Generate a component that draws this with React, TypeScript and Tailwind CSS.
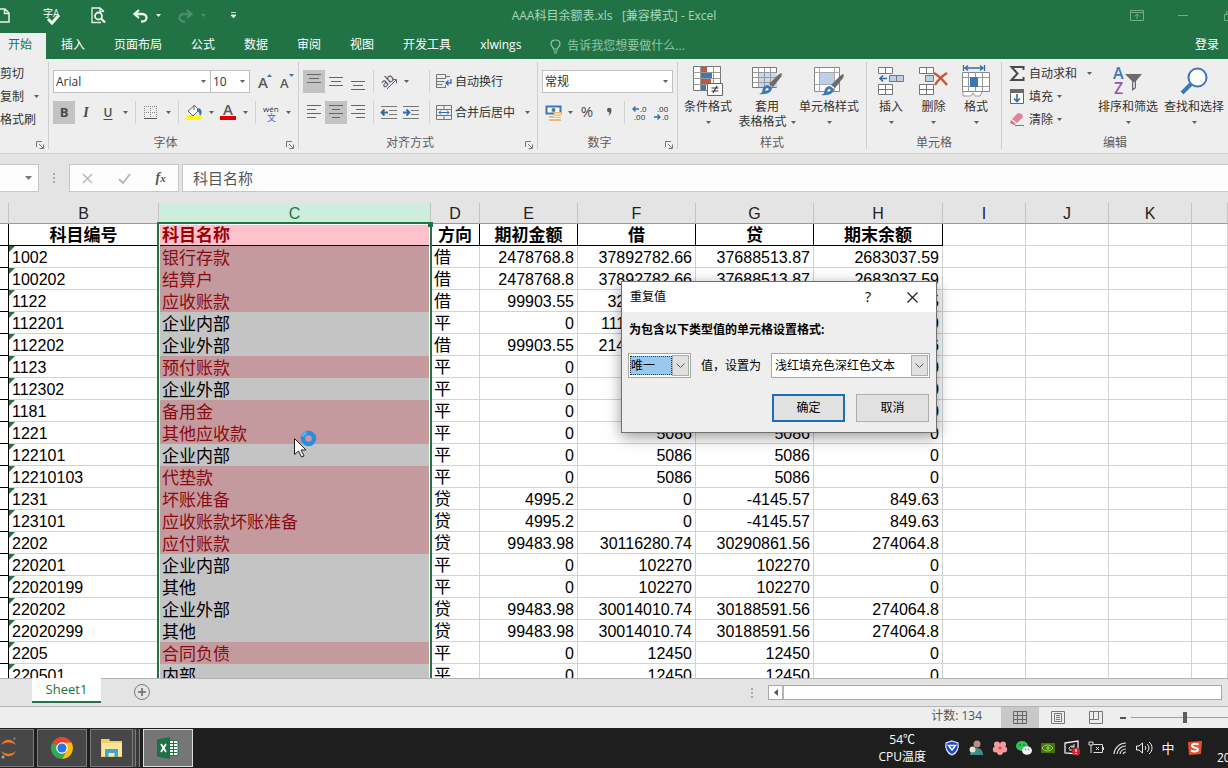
import { useState, type ReactNode } from "react";
import clsx from "clsx";

interface Account {
  code: string;
  name: string;
  side: string;
  opening: string;
  debit: string;
  credit: string;
  closing: string;
  unique?: boolean;
}

const accounts: Account[] = [
  { code: "1002", name: "银行存款", side: "借", opening: "2478768.8", debit: "37892782.66", credit: "37688513.87", closing: "2683037.59", unique: true },
  { code: "100202", name: "结算户", side: "借", opening: "2478768.8", debit: "37892782.66", credit: "37688513.87", closing: "2683037.59", unique: true },
  { code: "1122", name: "应收账款", side: "借", opening: "99903.55", debit: "3257120.18", credit: "3251708.28", closing: "105315.45", unique: true },
  { code: "112201", name: "企业内部", side: "平", opening: "0", debit: "11171200.18", credit: "11171199.59", closing: "0.59" },
  { code: "112202", name: "企业外部", side: "借", opening: "99903.55", debit: "21400000.18", credit: "21345880.28", closing: "105314.86" },
  { code: "1123", name: "预付账款", side: "平", opening: "0", debit: "12000", credit: "12000", closing: "0", unique: true },
  { code: "112302", name: "企业外部", side: "平", opening: "0", debit: "12000", credit: "12000", closing: "0" },
  { code: "1181", name: "备用金", side: "平", opening: "0", debit: "3000", credit: "3000", closing: "0", unique: true },
  { code: "1221", name: "其他应收款", side: "平", opening: "0", debit: "5086", credit: "5086", closing: "0", unique: true },
  { code: "122101", name: "企业内部", side: "平", opening: "0", debit: "5086", credit: "5086", closing: "0" },
  { code: "12210103", name: "代垫款", side: "平", opening: "0", debit: "5086", credit: "5086", closing: "0", unique: true },
  { code: "1231", name: "坏账准备", side: "贷", opening: "4995.2", debit: "0", credit: "-4145.57", closing: "849.63", unique: true },
  { code: "123101", name: "应收账款坏账准备", side: "贷", opening: "4995.2", debit: "0", credit: "-4145.57", closing: "849.63", unique: true },
  { code: "2202", name: "应付账款", side: "贷", opening: "99483.98", debit: "30116280.74", credit: "30290861.56", closing: "274064.8", unique: true },
  { code: "220201", name: "企业内部", side: "平", opening: "0", debit: "102270", credit: "102270", closing: "0" },
  { code: "22020199", name: "其他", side: "平", opening: "0", debit: "102270", credit: "102270", closing: "0" },
  { code: "220202", name: "企业外部", side: "贷", opening: "99483.98", debit: "30014010.74", credit: "30188591.56", closing: "274064.8" },
  { code: "22020299", name: "其他", side: "贷", opening: "99483.98", debit: "30014010.74", credit: "30188591.56", closing: "274064.8" },
  { code: "2205", name: "合同负债", side: "平", opening: "0", debit: "12450", credit: "12450", closing: "0", unique: true },
  { code: "220501", name: "内部", side: "平", opening: "0", debit: "12450", credit: "12450", closing: "0" },
];

const tabs = ["插入", "页面布局", "公式", "数据", "审阅", "视图", "开发工具", "xlwings"];

/* ---------- small shared pieces ---------- */

interface SvgProps {
  w: number;
  h: number;
  className?: string;
  children: ReactNode;
}

const Svg = ({ w, h, className, children }: SvgProps) => (
  <svg
    width={w}
    height={h}
    viewBox={`0 0 ${w} ${h}`}
    fill="none"
    className={clsx("shrink-0 overflow-visible", className)}
    aria-hidden="true"
  >
    {children}
  </svg>
);

const Caret = ({ className = "text-[#606060]" }: { className?: string }) => (
  <Svg w={5} h={3} className={className}>
    <path d="M0 0h5L2.500 3z" fill="currentColor" />
  </Svg>
);

const CaretButton = ({ label }: { label: string }) => (
  <button aria-label={label} className="flex h-[22px] w-3 items-center justify-center">
    <Caret />
  </button>
);

interface ToolProps {
  label: string;
  active?: boolean;
  children: ReactNode;
}

const Tool = ({ label, active, children }: ToolProps) => (
  <button
    aria-label={label}
    className={clsx("flex h-[23px] w-[22px] shrink-0 items-center justify-center", active && "bg-[#c3c3c3]")}
  >
    {children}
  </button>
);

const Divider = ({ className = "mx-1" }: { className?: string }) => (
  <span className={clsx("h-[23px] w-px shrink-0 bg-[#d2d2d2]", className)} />
);

interface GroupProps {
  title: string;
  className: string;
  launcher?: boolean;
  last?: boolean;
  children: ReactNode;
}

const Group = ({ title, className, launcher, last, children }: GroupProps) => (
  <section className={clsx("flex shrink-0 pt-[3px] pb-1", className)}>
    <div className="flex min-w-0 flex-1 flex-col">
      <div className="flex-1">{children}</div>
      <div className="flex h-[13px] items-center">
        <h2 className="flex-1 text-center leading-4 text-[#5c5c5c]">{title}</h2>
        {launcher && (
          <button aria-label={`${title}设置`} className="flex w-4 justify-center pt-1">
            <Svg w={8} h={8}>
              <path d="M.5 6V.5H6M3 3l4 4M7.500 3.500v4h-4" stroke="#777" />
            </Svg>
          </button>
        )}
      </div>
    </div>
    {!last && <span className="w-px bg-[#cfcfcf]" />}
  </section>
);

interface BigButtonProps {
  icon: ReactNode;
  label: string;
  second?: string;
  className: string;
}

const BigButton = ({ icon, label, second, className }: BigButtonProps) => (
  <button className={clsx("flex shrink-0 flex-col items-center pt-px whitespace-nowrap", className)}>
    <span className="flex h-9 items-center">{icon}</span>
    <span className="leading-4">{label}</span>
    <span className="flex h-[14px] items-center gap-1 leading-[14px]">
      {second}
      <Caret />
    </span>
  </button>
);

/* ---------- icons ---------- */

const Lines = ({ widths, top = 0 }: { widths: [number, number][]; top?: number }) => (
  <Svg w={14} h={15}>
    {widths.map(([x, w], i) => (
      <path key={i} d={`M${x} ${top + i * 4 + 0.5}h${w}`} stroke="#666" />
    ))}
  </Svg>
);

const Indent = ({ right }: { right?: boolean }) => (
  <Svg w={17} h={13}>
    <path d="M0 .5h16M8 4.500h8M8 8.500h8M0 12.500h16" stroke="#777" />
    <path
      d={right ? "M0 6.500h6M3.500 3.500l3 3-3 3" : "M1 6.500h6M3.500 3.500l-3 3 3 3"}
      stroke="#2f6da8"
      strokeWidth="1.800"
    />
  </Svg>
);

const Brush = ({ x, y }: { x: number; y: number }) => (
  <g transform={`translate(${x} ${y})`}>
    <path d="M22 0c1 0 1 2 0 4l-8 10-4-3 9-9z" fill="#6b6b6b" />
    <path d="M9 12l4 3c0 4-5 7-13 6 4-1 3-3 4-6 1-2 3-3 5-3z" fill="#3c78b4" />
    <path d="M6 17c1 1 2 1 4-1l-2-1z" fill="#fff" />
  </g>
);

const ConditionalIcon = () => (
  <Svg w={30} h={31}>
    <path d="M.5 .5h27v24H.5z" fill="#fff" stroke="#777" />
    <path d="M8 1h6v5H8zM8 13h10v5H8z" fill="#c8563a" />
    <path d="M8 7h11v5H8zM8 19h5v5H8z" fill="#3c78b4" />
    <path d="M.5 6.500h27M.5 12.500h27M.5 18.500h27M7.500 .5v24M20.500 .5v24" stroke="#999" />
    <path d="M14.500 17.500h15v12h-15z" fill="#fff" stroke="#666" />
    <path d="M18.500 22h7M18.500 25h7M24 20l-4 7" stroke="#333" strokeWidth="1.200" />
  </Svg>
);

const FormatTableIcon = () => (
  <Svg w={31} h={29}>
    <path d="M.5 .5h24v20H.5z" fill="#fff" stroke="#777" />
    <path d="M7 6h18v14H7z" fill="#c9d8ec" />
    <path d="M.5 5.500h24M.5 10.500h24M.5 15.500h24M6.500 .5v20M12.500 .5v20M18.500 .5v20" stroke="#999" />
    <Brush x={7} y={6} />
  </Svg>
);

const CellStyleIcon = () => (
  <Svg w={31} h={29}>
    <path d="M.5 .5h25v24H.5z" fill="#fff" stroke="#888" />
    <path d="M.5 5.500h25M.5 17.500h25M5.500 .5v24M20.500 .5v24" stroke="#aaa" />
    <path d="M6 6h14v11H6z" fill="#bcd0ea" />
    <Brush x={7} y={7} />
  </Svg>
);

const InsertIcon = () => (
  <Svg w={27} h={29}>
    <path d="M.5 .5h14v6H.5zM7.500 .5v6M.5 17.500h14v10H.5zM.5 22.500h14M7.500 17.500v10" fill="#fff" stroke="#777" />
    <path d="M11.500 8.500h14v6h-14zM18.500 8.500v6" fill="#bcd0ea" stroke="#777" />
    <path d="M2 11.500h7M5 8.500l-3 3 3 3" stroke="#2f6da8" strokeWidth="1.600" />
  </Svg>
);

const DeleteIcon = () => (
  <Svg w={30} h={29}>
    <path d="M.5 .5h14v6H.5zM7.500 .5v6M.5 17.500h14v10H.5zM.5 22.500h14M7.500 17.500v10" fill="#fff" stroke="#777" />
    <path d="M6.500 8.500h8v6h-8z" fill="#bcd0ea" stroke="#777" />
    <path d="M15 6c5 3 9 7 13 12M28 6c-5 3-9 7-12 12" stroke="#d0532f" strokeWidth="2.400" />
  </Svg>
);

const FormatIcon = () => (
  <Svg w={29} h={32}>
    <path d="M1.500 0v6M22.500 0v6M3 3h18M6 .5L3 3l3 2.500M18 .5L21 3l-3 2.500" stroke="#2f6da8" strokeWidth="1.300" />
    <path d="M.5 7.500h27v19H.5z" fill="#fff" stroke="#888" />
    <path d="M.5 12.500h27M.5 21.500h27M6.500 7.500v19M20.500 7.500v19M13.500 7.500v5M13.500 21.500v5" stroke="#999" />
    <path d="M8 12h8v10H8z" fill="#3c78b4" />
    <path d="M1 27v4h8l2-3 2 3h5l2-4" fill="#fff" stroke="#999" />
  </Svg>
);

const SortIcon = () => (
  <Svg w={30} h={29}>
    <text x="0" y="12" fontSize="16" fontWeight="600" fill="#3c78b4">A</text>
    <text x="1" y="27" fontSize="16" fontWeight="600" fill="#9257b5">Z</text>
    <path d="M12 7h17l-6 7v7l-4 3V14z" fill="#6b6b6b" />
    <path d="M21 15v6" stroke="#eee" strokeWidth="1.500" />
  </Svg>
);

const FindIcon = () => (
  <Svg w={28} h={28}>
    <circle cx="17.500" cy="10.500" r="9" fill="#fff" stroke="#3c78b4" strokeWidth="2" />
    <path d="M11 17L2 26" stroke="#3c78b4" strokeWidth="4" />
  </Svg>
);

/* ---------- window header ---------- */

const TitleBar = () => (
  <header className="flex h-[33px] items-center pb-0.5 text-[#e8f5ec]">
    <div className="flex flex-1 items-center">
      <button aria-label="新建" className="-ml-2">
        <Svg w={18} h={15}>
          <path d="M1 1h12l4 4v9H1zM12.500 1v4.500H17" stroke="currentColor" strokeWidth="1.500" />
        </Svg>
      </button>
      <button aria-label="拼写检查" className="ml-[33px]">
        <Svg w={18} h={18}>
          <text x="0" y="10" fontSize="10" fontWeight="500" fill="currentColor">字A</text>
          <path d="M5 12l4 4 7-8" stroke="currentColor" strokeWidth="3" />
        </Svg>
      </button>
      <button aria-label="打印预览" className="ml-[30px]">
        <Svg w={15} h={17}>
          <path d="M12.500 5V4L9 1H1v14.500h9M9 1v3.500h3.500" stroke="currentColor" strokeWidth="1.300" />
          <circle cx="7.500" cy="9" r="3.500" stroke="currentColor" strokeWidth="1.800" />
          <path d="M10 11.500l4 4" stroke="currentColor" strokeWidth="2.400" />
        </Svg>
      </button>
      <button aria-label="撤消" className="ml-[27px]">
        <Svg w={15} h={14}>
          <path d="M6 1L1.500 5 6 9M2 5h7c6 0 6 7.500 0 7.500H8" stroke="currentColor" strokeWidth="2.300" />
        </Svg>
      </button>
      <Caret className="ml-2 text-[#e8f5ec]" />
      <button aria-label="恢复" className="ml-[17px] text-[#4b9068]">
        <Svg w={15} h={14}>
          <path d="M9 1l4.500 4L9 9M13 5H6c-6 0-6 7.500 0 7.500h1" stroke="currentColor" strokeWidth="2.300" />
        </Svg>
      </button>
      <Caret className="ml-2 text-[#4b9068]" />
      <button aria-label="自定义快速访问工具栏" className="ml-6">
        <Svg w={7} h={7}>
          <path d="M1 .5h5M1 3h5L3.500 6z" stroke="currentColor" fill="currentColor" strokeWidth=".8" />
        </Svg>
      </button>
    </div>
    <h1 className="whitespace-pre text-[#a9d6ba]">AAA科目余额表.xls   [兼容模式] - Excel</h1>
    <div className="flex flex-1 items-center justify-end overflow-hidden text-[#6fae87]">
      <button aria-label="功能区显示选项">
        <Svg w={14} h={11}>
          <path d="M.5 .5h13v10H.5zM.5 2.500h13M7 9V4.500M4.500 6.500L7 4l2.500 2.500" stroke="currentColor" />
        </Svg>
      </button>
      <button aria-label="最小化" className="ml-[34px]">
        <Svg w={10} h={3}>
          <path d="M0 1.500h10" stroke="currentColor" />
        </Svg>
      </button>
      <button aria-label="向下还原" className="ml-[36px] w-1 overflow-hidden">
        <Svg w={11} h={10}>
          <path d="M.5 3.500h7v6h-7zM2.500 3.500v-3h8v6h-3" stroke="currentColor" />
        </Svg>
      </button>
    </div>
  </header>
);

const TabBar = () => (
  <nav className="flex h-[26px] items-stretch text-white">
    <button className="bg-[#eeeeee] pr-[14px] pb-0.5 pl-2 text-[#217346]">开始</button>
    {tabs.map((tab) => (
      <button key={tab} className="pr-[14px] pb-0.5 pl-[15px] whitespace-nowrap">
        {tab}
      </button>
    ))}
    <label className="flex items-center gap-1.5 pl-[15px] text-[#93c6a7]">
      <Svg w={11} h={15}>
        <path d="M3.500 10C3.500 8 1 7.500 1 4.800 1 2.500 3 1 5.500 1S10 2.500 10 4.800C10 7.500 7.500 8 7.500 10zM3.500 12h4M4 14h3" stroke="currentColor" strokeWidth="1.200" />
      </Svg>
      <input
        aria-label="告诉我您想要做什么"
        placeholder="告诉我您想要做什么..."
        className="w-40 bg-transparent outline-none placeholder:text-[#93c6a7]"
      />
    </label>
    <button className="mr-[9px] ml-auto pb-0.5">登录</button>
  </nav>
);

/* ---------- ribbon ---------- */

const ClipboardGroup = () => (
  <Group title="" className="w-[49px]" launcher>
    <div className="flex flex-col items-start overflow-hidden whitespace-nowrap">
      <button className="h-[23px]">剪切</button>
      <div className="flex h-[23px] w-full items-center">
        <button>复制</button>
        <button aria-label="复制选项" className="ml-[9px] p-px">
          <Caret />
        </button>
      </div>
      <button className="h-[23px]">格式刷</button>
    </div>
  </Group>
);

const FontGroup = () => (
  <Group title="字体" className="w-[250px]" launcher>
    <div className="flex flex-col gap-2 pt-2 pl-1">
      <div className="flex items-center">
        <label className="flex h-[23px] w-[158px] items-center border border-[#c0c0c0] bg-white pr-1">
          <select aria-label="字体" className="min-w-0 flex-1 appearance-none pl-0.5 outline-none">
            <option>Arial</option>
          </select>
          <Caret />
        </label>
        <label className="-ml-px flex h-[23px] w-10 items-center border border-[#c0c0c0] bg-white pr-1">
          <select aria-label="字号" className="min-w-0 flex-1 appearance-none pl-0.5 outline-none">
            <option>10</option>
          </select>
          <Caret />
        </label>
        <div className="ml-1 flex">
          <Tool label="增大字号">
            <Svg w={14} h={16}>
              <text x="0" y="14" fontSize="15" fontWeight="600" fill="#5c5c5c">A</text>
              <path d="M9 3h5l-2.500-3z" fill="#3c78b4" />
            </Svg>
          </Tool>
          <Tool label="减小字号">
            <Svg w={14} h={16}>
              <text x="0" y="14" fontSize="13" fontWeight="600" fill="#5c5c5c">A</text>
              <path d="M9 0h5l-2.500 3z" fill="#3c78b4" />
            </Svg>
          </Tool>
        </div>
      </div>
      <div className="flex items-center text-[#4a4a4a]">
        <Tool label="加粗" active>
          <b className="text-[13px]">B</b>
        </Tool>
        <Tool label="倾斜">
          <b className="font-['Liberation_Serif',serif] text-sm italic">I</b>
        </Tool>
        <Tool label="下划线">
          <b className="font-semibold underline underline-offset-2">U</b>
        </Tool>
        <CaretButton label="下划线选项" />
        <Divider />
        <Tool label="边框">
          <Svg w={14} h={14}>
            <path d="M.5 0v13M6.500 0v13M12.500 0v13M0 .5h13M0 6.500h13" stroke="#888" strokeDasharray="1 1" />
            <path d="M0 12.500h13" stroke="#555" />
          </Svg>
        </Tool>
        <CaretButton label="边框选项" />
        <Divider />
        <Tool label="填充颜色">
          <Svg w={17} h={17}>
            <path d="M8 2L2 7l5 5 6-6-5-5v5" fill="#fff" stroke="#666" />
            <path d="M11 4c5 0 6 5 3 8-1-2 0-4-3-5z" fill="#3c78b4" />
            <path d="M0 12h16v4H0z" fill="#ffff1e" />
          </Svg>
        </Tool>
        <CaretButton label="填充颜色选项" />
        <Tool label="字体颜色">
          <Svg w={16} h={17}>
            <text x="3" y="11" fontSize="15" fontWeight="600" fill="#5c5c5c">A</text>
            <path d="M0 12h16v4H0z" fill="#e00000" />
          </Svg>
        </Tool>
        <CaretButton label="字体颜色选项" />
        <Divider />
        <Tool label="拼音">
          <Svg w={16} h={18}>
            <text x="0" y="8" fontSize="8" fill="#333">wén</text>
            <text x="4" y="17" fontSize="9" fill="#2f6da8">文</text>
          </Svg>
        </Tool>
        <CaretButton label="拼音选项" />
      </div>
    </div>
  </Group>
);

const AlignGroup = () => (
  <Group title="对齐方式" className="w-[239px]" launcher>
    <div className="flex flex-col gap-2 pt-2 pl-1">
      <div className="flex items-center">
        <Tool label="顶端对齐" active>
          <Lines widths={[[0, 14], [2, 10], [0, 14]]} />
        </Tool>
        <Tool label="垂直居中">
          <Lines widths={[[0, 14], [2, 10], [0, 14]]} top={3} />
        </Tool>
        <Tool label="底端对齐">
          <Lines widths={[[0, 14], [2, 10], [0, 14]]} top={7} />
        </Tool>
        <Divider />
        <Tool label="方向">
          <Svg w={16} h={16}>
            <text x="0" y="11" fontSize="12" fill="#444" transform="rotate(-42 6 8)">ab</text>
            <path d="M6 15L15 6M11.500 5.500H15.500V9.500" stroke="#666" />
          </Svg>
        </Tool>
        <CaretButton label="方向选项" />
        <Divider className="mr-1.5 ml-[17px]" />
        <button className="flex items-center gap-[3px]">
          <Svg w={16} h={15}>
            <path d="M.5 .5h9v4h-9zM9 2.500h5M.5 7.500h8M.5 10.500h6M.5 13.500h9M.5 4v10M9.500 11v3" stroke="#777" />
            <path d="M15 5v4h-5M12.500 6.500L10 9l2.500 2.500" stroke="#2f6da8" strokeWidth="1.300" />
          </Svg>
          自动换行
        </button>
      </div>
      <div className="flex items-center">
        <Tool label="左对齐">
          <Lines widths={[[0, 14], [0, 9], [0, 14], [0, 9]]} />
        </Tool>
        <Tool label="居中" active>
          <Lines widths={[[0, 14], [3, 8], [0, 14], [3, 8]]} />
        </Tool>
        <Tool label="右对齐">
          <Lines widths={[[0, 14], [5, 9], [0, 14], [5, 9]]} />
        </Tool>
        <Divider />
        <Tool label="减少缩进量">
          <Indent />
        </Tool>
        <Tool label="增加缩进量">
          <Indent right />
        </Tool>
        <Divider className="mr-1.5 ml-[7px]" />
        <button className="flex items-center gap-[3px]">
          <Svg w={16} h={15}>
            <path d="M.5 .5h15v14H.5zM.5 4.500h15M.5 10.500h15M8 .5v4M8 10.500v4" stroke="#777" />
            <path d="M3 7.500h10M5 5.500l-2 2 2 2M11 5.500l2 2-2 2" stroke="#2f6da8" />
          </Svg>
          合并后居中
        </button>
        <span className="w-1.5" />
        <CaretButton label="合并选项" />
      </div>
    </div>
  </Group>
);

const NumberGroup = () => (
  <Group title="数字" className="w-[140px]" launcher>
    <div className="flex flex-col gap-2 px-1 pt-2">
      <label className="flex h-[23px] items-center border border-[#c0c0c0] bg-white pr-1">
        <select aria-label="数字格式" className="min-w-0 flex-1 appearance-none pl-0.5 outline-none">
          <option>常规</option>
        </select>
        <Caret />
      </label>
      <div className="flex items-center">
        <Tool label="会计数字格式">
          <Svg w={17} h={16}>
            <path d="M1.500 1.500h14v7h-14z" fill="#fff" stroke="#3c78b4" strokeWidth="2" />
            <circle cx="8.500" cy="5" r="2" fill="#3c78b4" />
            <path d="M9 7h7v9H9zM4 11h6v5H4z" fill="#f0b964" />
            <path d="M9 9h7M9 11.500h7M4 13.500h12" stroke="#fff" />
          </Svg>
        </Tool>
        <CaretButton label="会计数字格式选项" />
        <Tool label="百分比样式">
          <span className="pb-1 text-[15px] leading-4 text-[#4a4a4a]">%</span>
        </Tool>
        <Tool label="千位分隔样式">
          <Svg w={5} h={10}>
            <path d="M0 2a2 2 0 0 1 4.500 0c0 3-1 5-3.500 6 1-1 1.500-2 1.500-3.500C1 4.500 0 3.500 0 2z" fill="#5c5c5c" />
          </Svg>
        </Tool>
        <Divider />
        <Tool label="增加小数位数">
          <Svg w={16} h={16}>
            <text x="8" y="7" fontSize="8" fill="#333">.0</text>
            <text x="2" y="15" fontSize="8" fill="#333">.00</text>
            <path d="M1 4h6M3.500 1.500L1 4l2.500 2.500" stroke="#2f6da8" strokeWidth="1.300" />
          </Svg>
        </Tool>
        <Tool label="减少小数位数">
          <Svg w={16} h={16}>
            <text x="3" y="7" fontSize="8" fill="#333">.00</text>
            <text x="8" y="15" fontSize="8" fill="#333">.0</text>
            <path d="M0 12h6M3.500 9.500L6 12l-2.500 2.500" stroke="#2f6da8" strokeWidth="1.300" />
          </Svg>
        </Tool>
      </div>
    </div>
  </Group>
);

const EditGroup = () => (
  <Group title="编辑" className="min-w-[226px] flex-1" last>
    <div className="flex">
      <div className="flex w-[94px] flex-col pl-2">
        <button className="flex h-[23px] items-center">
          <Svg w={15} h={15} className="mr-1">
            <path d="M13.500 4V1H1.500l6 6.500-6 6.500h12v-3" stroke="#4a4a4a" strokeWidth="2" />
          </Svg>
          自动求和
          <Caret className="ml-2.5 text-[#606060]" />
        </button>
        <button className="flex h-[23px] items-center">
          <Svg w={15} h={15} className="mr-1">
            <path d="M.5 .5h13v14H.5z" fill="#fff" stroke="#666" />
            <path d="M0 0h14v4H0z" fill="#6b6b6b" />
            <path d="M7 5v8M4 9.500l3 3 3-3" stroke="#2f6da8" strokeWidth="1.600" />
          </Svg>
          填充
          <Caret className="ml-1 text-[#606060]" />
        </button>
        <button className="flex h-[23px] items-center">
          <Svg w={15} h={15} className="mr-1">
            <path d="M8 1l4 1 1 3-6 6-5-4z" fill="#e58396" />
            <path d="M1 8l5 4-2 1-4-2z" fill="#d9748a" />
            <path d="M5 13.500h9" stroke="#777" />
          </Svg>
          清除
          <Caret className="ml-1 text-[#606060]" />
        </button>
      </div>
      <BigButton icon={<SortIcon />} label="排序和筛选" className="w-16" />
      <BigButton icon={<FindIcon />} label="查找和选择" className="ml-0.5 w-16" />
    </div>
  </Group>
);

const Ribbon = () => (
  <div className="flex h-[95px] overflow-hidden border-b border-[#cfcfcf] bg-[#eeeeee] text-[#333]">
    <ClipboardGroup />
    <FontGroup />
    <AlignGroup />
    <NumberGroup />
    <Group title="样式" className="w-[189px]">
      <div className="flex">
        <BigButton icon={<ConditionalIcon />} label="条件格式" className="w-[60px]" />
        <BigButton icon={<FormatTableIcon />} label="套用" second="表格格式" className="w-[58px]" />
        <BigButton icon={<CellStyleIcon />} label="单元格样式" className="ml-px w-16" />
      </div>
    </Group>
    <Group title="单元格" className="w-[135px]">
      <div className="flex pl-[3px]">
        <BigButton icon={<InsertIcon />} label="插入" className="w-[42px]" />
        <BigButton icon={<DeleteIcon />} label="删除" className="w-[43px]" />
        <BigButton icon={<FormatIcon />} label="格式" className="w-[42px]" />
      </div>
    </Group>
    <EditGroup />
  </div>
);

const Dots = () => (
  <Svg w={2} h={10}>
    <path d="M0 0h2v2H0zM0 4h2v2H0zM0 8h2v2H0z" fill="#aaa" />
  </Svg>
);

const FormulaBar = () => (
  <div className="flex h-[49px] items-center bg-[#e4e4e4] pb-px">
    <div className="flex h-7 w-[39px] items-center justify-end border border-l-0 border-[#c6c6c6] bg-[#fdfdfd] pr-1.5">
      <button aria-label="名称框">
        <Svg w={7} h={4}>
          <path d="M0 0h7L3.500 4z" fill="#777" />
        </Svg>
      </button>
    </div>
    <div className="flex w-[30px] justify-center">
      <Dots />
    </div>
    <div className="flex h-7 w-[110px] items-center justify-around border border-[#c6c6c6] bg-[#fdfdfd]">
      <button aria-label="取消输入">
        <Svg w={11} h={11}>
          <path d="M1 1l9 9M10 1l-9 9" stroke="#b9b9b9" strokeWidth="1.500" />
        </Svg>
      </button>
      <button aria-label="确认输入">
        <Svg w={13} h={11}>
          <path d="M1 6l4 4 7-9" stroke="#b9b9b9" strokeWidth="2" />
        </Svg>
      </button>
      <button
        aria-label="插入函数"
        className="font-['Liberation_Serif',serif] text-sm leading-4 font-bold text-[#555] italic"
      >
        f<span className="text-[11px]">x</span>
      </button>
    </div>
    <input
      aria-label="编辑栏"
      defaultValue="科目名称"
      className="ml-[3px] h-7 min-w-0 flex-1 border border-r-0 border-[#c6c6c6] bg-[#fdfdfd] pb-0.5 pl-2.5 text-[15px] text-[#555] outline-none"
    />
  </div>
);

/* ---------- worksheet ---------- */

const grid = "border-r border-b border-[#d2d2d2]";
const headCell = "border-r border-b border-black p-0 pt-0.5 text-center text-[17px] font-bold";

const Sheet = () => (
  <main className="relative min-h-0 flex-1 overflow-hidden bg-white font-['Liberation_Sans','Noto_Sans_CJK_SC',sans-serif] text-base leading-[19px] text-black">
    <table className="w-full table-fixed border-separate border-spacing-0">
      <colgroup>
        <col className="w-[9px]" />
        <col className="w-[150px]" />
        <col className="w-[272px]" />
        <col className="w-[49px]" />
        <col className="w-[98px]" />
        <col className="w-[118px]" />
        <col className="w-[118px]" />
        <col className="w-[129px]" />
        <col className="w-[83px]" />
        <col className="w-[83px]" />
        <col className="w-[83px]" />
        <col />
      </colgroup>
      <thead>
        <tr className="h-[21px] bg-[#e4e4e4]">
          {["", "B", "C", "D", "E", "F", "G", "H", "I", "J", "K", ""].map((letter, i) => (
            <th
              key={i}
              className={clsx(
                "border-r border-b border-r-[#c4c4c4] border-b-[#9b9b9b] p-0 pt-0.5 leading-[18px] font-normal",
                letter === "C" ? "bg-[#cdeedd] text-[#217346]" : "text-[#222]",
              )}
            >
              {letter}
            </th>
          ))}
        </tr>
      </thead>
      <tbody>
        <tr className="h-[22px]">
          <td className="border-r border-b border-black p-0" />
          <td className={headCell}>科目编号</td>
          <td className="border-b border-black bg-[#ffc1cb] p-0 pt-0.5 pl-[3px] text-[17px] font-bold text-[#9c0006]">
            科目名称
          </td>
          <td className={headCell}>方向</td>
          <td className={headCell}>期初金额</td>
          <td className={headCell}>借</td>
          <td className={headCell}>贷</td>
          <td className={headCell}>期末余额</td>
          <td className={grid} />
          <td className={grid} />
          <td className={grid} />
          <td className={grid} />
        </tr>
        {accounts.map((row) => (
          <tr key={row.code} className="h-[22px]">
            <td className="border-r border-b border-black p-0" />
            <td className={clsx(grid, "relative p-0 pt-0.5 pl-[3px]")}>
              <span className="absolute top-0 left-0 border-t-[6px] border-r-[6px] border-t-[#217346] border-r-transparent" />
              {row.code}
            </td>
            <td
              className={clsx(
                "p-0 pt-0.5 pl-[3px] text-[17px]",
                row.unique ? "bg-[#c49a9e] text-[#8b0a12]" : "bg-[#c4c4c4]",
              )}
            >
              {row.name}
            </td>
            <td className={clsx(grid, "p-0 pt-0.5 pl-[3px] text-[17px]")}>{row.side}</td>
            <td className={clsx(grid, "p-0 pt-0.5 pr-[3px] text-right")}>{row.opening}</td>
            <td className={clsx(grid, "p-0 pt-0.5 pr-[3px] text-right")}>{row.debit}</td>
            <td className={clsx(grid, "p-0 pt-0.5 pr-[3px] text-right")}>{row.credit}</td>
            <td className={clsx(grid, "p-0 pt-0.5 pr-[3px] text-right")}>{row.closing}</td>
            <td className={grid} />
            <td className={grid} />
            <td className={grid} />
            <td className={grid} />
          </tr>
        ))}
      </tbody>
    </table>
    {/* selection frame around column C */}
    <div className="pointer-events-none absolute top-[19px] -bottom-1 left-[157px] w-[275px] border-2 border-[#217346] shadow-[inset_0_0_0_1px_#fff]">
      <span className="absolute -top-0.5 -right-[3px] h-[5px] w-[5px] bg-[#217346]" />
    </div>
  </main>
);

const SheetTabs = () => (
  <div className="flex h-[29px] items-start border-t border-b border-[#b4b4b4] bg-[#e4e4e4]">
    <button className="-mt-px ml-8 h-[25px] w-[69px] border-b-2 border-[#217346] bg-white text-[13px] text-[#217346]">
      Sheet1
    </button>
    <button aria-label="新工作表" className="mt-[5px] ml-[33px]">
      <Svg w={16} h={16}>
        <circle cx="8" cy="8" r="7.500" stroke="#7a7a7a" />
        <path d="M8 4v8M4 8h8" stroke="#6a6a6a" strokeWidth="1.600" />
      </Svg>
    </button>
    <div className="ml-auto flex items-center gap-[15px] pt-1.5 pr-1.5">
      <Dots />
      <div className="flex h-[15px] w-[454px] border border-[#a9a9a9] bg-white">
        <button aria-label="向左滚动" className="flex w-[15px] items-center justify-center border-r-2 border-[#b4b4b4]">
          <Svg w={4} h={7}>
            <path d="M4 0v7L0 3.500z" fill="#555" />
          </Svg>
        </button>
      </div>
    </div>
  </div>
);

const StatusBar = () => (
  <footer className="flex h-[21px] items-stretch justify-end bg-[#eeeeee] text-[#555]">
    <span className="mr-[19px] pt-px leading-4">计数: 134</span>
    <button aria-label="普通" className="flex w-[38px] items-center justify-center bg-[#c8c8c8]">
      <Svg w={14} h={13}>
        <path d="M.5 .5h13v12H.5zM.5 4.500h13M.5 8.500h13M4.500 .5v12M9.500 .5v12" stroke="#666" />
      </Svg>
    </button>
    <button aria-label="页面布局" className="flex w-[38px] items-center justify-center">
      <Svg w={14} h={13}>
        <path d="M.5 .5h13v12H.5zM3.500 2.500h7v8h-7zM5 4.500h4M5 6.500h4M5 8.500h4" stroke="#777" />
      </Svg>
    </button>
    <button aria-label="分页预览" className="flex w-[38px] items-center justify-center">
      <Svg w={14} h={13}>
        <path d="M.5 .5h13v12H.5zM4.500 .5v8M9.500 .5v8M4.500 8.500h5M.5 8.500h4" stroke="#777" />
      </Svg>
    </button>
    <button aria-label="缩小" className="ml-[5px]">
      <Svg w={6} h={2}>
        <path d="M0 0h6v2H0z" fill="#555" />
      </Svg>
    </button>
    <div className="ml-[5px] flex w-[97px] items-center overflow-hidden">
      <input
        type="range"
        aria-label="缩放"
        defaultValue={50}
        className="h-3 w-[108px] shrink-0 appearance-none bg-[linear-gradient(#a0a0a0,#a0a0a0)] bg-[length:100%_1px] bg-center bg-no-repeat [&::-webkit-slider-thumb]:h-[11px] [&::-webkit-slider-thumb]:w-1 [&::-webkit-slider-thumb]:appearance-none [&::-webkit-slider-thumb]:bg-[#5c5c5c]"
      />
    </div>
  </footer>
);

/* ---------- taskbar ---------- */

const taskButton = "flex h-[38px] items-center border";

const Tray = ({ label, children }: { label: string; children: ReactNode }) => (
  <button aria-label={label} className="flex w-6 justify-center">
    <Svg w={16} h={16}>{children}</Svg>
  </button>
);

const Taskbar = () => (
  <div className="flex h-10 items-center overflow-hidden bg-[#1e1e1e] text-white">
    <button aria-label="Jupyter" className={clsx(taskButton, "w-[34px] border-l-0 border-[#7c7c7c] bg-[#474747]")}>
      <Svg w={17} h={22}>
        <path d="M1 8c3-7 12-7 15 0-4-3.500-11-3.500-15 0zM1 14c3 7 12 7 15 0-4 3.500-11 3.500-15 0z" fill="#e8772e" />
        <circle cx="3" cy="20" r="1.500" fill="#aaa" />
        <circle cx="14.500" cy="1.500" r="1" fill="#999" />
      </Svg>
    </button>
    <button aria-label="Chrome" className={clsx(taskButton, "ml-[3px] w-[50px] justify-center border-[#7c7c7c] bg-[#474747]")}>
      <Svg w={22} h={22}>
        <path d="M11 11L1.500 5.500A11 11 0 0 1 20.500 5.500z" fill="#ea4335" />
        <path d="M11 11L1.500 5.500A11 11 0 0 0 11 22l4.500-8z" fill="#34a853" />
        <path d="M11 22A11 11 0 0 0 20.500 5.500H11l4.800 8z" fill="#fbbc05" />
        <circle cx="11" cy="11" r="5.800" fill="#fff" />
        <circle cx="11" cy="11" r="4.600" fill="#2b74e2" />
      </Svg>
    </button>
    <button aria-label="文件资源管理器" className={clsx(taskButton, "ml-[3px] w-[43px] justify-center border-[#7c7c7c] bg-[#474747]")}>
      <Svg w={22} h={20}>
        <path d="M0 1h8l1 2h12v16H0z" fill="#f3cf63" />
        <path d="M1 5h20v13H1z" fill="#fde59b" />
        <path d="M4 19v-8h13v8h-3.500v-4h-6v4z" fill="#3fa7cf" />
      </Svg>
    </button>
    <span className="h-[38px] w-[3px] border-r border-[#7c7c7c] bg-[#474747]" />
    <span className="h-[38px] w-1 border-r border-[#7c7c7c] bg-[#3a3a3a]" />
    <button aria-label="Excel" className={clsx(taskButton, "ml-[3px] w-[50px] justify-center border-[#dcdcdc] bg-[#767676]")}>
      <Svg w={22} h={22}>
        <path d="M11 3.500h10v15H11z" fill="#fff" stroke="#217346" />
        <path d="M12 6.500h8M12 9.500h8M12 12.500h8M12 15.500h8M16.500 4v14" stroke="#217346" />
        <path d="M0 2.500L13 0v22L0 19.500z" fill="#1e7145" />
        <path d="M4 7l5 8M9 7l-5 8" stroke="#fff" strokeWidth="1.800" />
      </Svg>
    </button>
    <div className="ml-auto text-center leading-[17px]">
      <div>54℃</div>
      <div>CPU温度</div>
    </div>
    <div className="ml-3.5 flex">
      <Tray label="安全">
        <path d="M8 1l6 2c1 5-1 10-6 12C3 13 1 8 2 3z" fill="#1f48c8" stroke="#dfe8ff" strokeWidth="1.200" />
        <path d="M4.500 5.500h7L8 10z" stroke="#fff" strokeWidth="1.500" />
      </Tray>
      <Tray label="联系人">
        <circle cx="9" cy="4" r="3.500" fill="#b78f84" />
        <path d="M2 15c0-5 3-7 7-7s6 3 6 7z" fill="#3d8f86" />
        <circle cx="4.500" cy="9.500" r="3" fill="#e8e4dc" />
      </Tray>
      <Tray label="花">
        <g fill="#f39a9f">
          <circle cx="5" cy="4.500" r="3" />
          <circle cx="11" cy="4.500" r="3" />
          <circle cx="3.800" cy="9.500" r="3" />
          <circle cx="12.200" cy="9.500" r="3" />
          <circle cx="8" cy="12" r="3" />
          <circle cx="8" cy="8" r="3" />
        </g>
        <circle cx="8" cy="8" r="1.500" fill="#d9474f" />
      </Tray>
      <Tray label="微信">
        <ellipse cx="6" cy="6" rx="6" ry="5" fill="#2fc55a" />
        <ellipse cx="11" cy="10.500" rx="5" ry="4.300" fill="#f2f2f2" />
        <circle cx="4" cy="5" r=".8" fill="#14502a" />
        <circle cx="8" cy="5" r=".8" fill="#14502a" />
        <circle cx="9.500" cy="9.500" r=".7" fill="#777" />
        <circle cx="12.500" cy="9.500" r=".7" fill="#777" />
      </Tray>
      <Tray label="NVIDIA">
        <path d="M1 3h14v10H1z" fill="#44720f" />
        <path d="M2 8c3-4 8-4 11 0-3 4-8 4-11 0z" stroke="#a4d64a" />
        <circle cx="8" cy="8" r="1.800" fill="#8cc63f" />
      </Tray>
      <Tray label="更新">
        <path d="M1 3l13-2v13L1 13z" stroke="#eee" strokeWidth="1.300" />
        <path d="M5 9c0-3 4-4 5-2M10 4v3H7M5 10h3" stroke="#eee" />
        <circle cx="12" cy="11.500" r="4" fill="#d02832" />
        <path d="M12 9v3M12 13v1" stroke="#fff" strokeWidth="1.200" />
      </Tray>
      <Tray label="电源">
        <path d="M5.500 4.500h9v8h-9M15.500 7v3M1 2v3h4V2M3 5v8M2 1v2M4 1v2M8 7l3 3M11 7l-3 3" stroke="#ddd" />
      </Tray>
      <Tray label="网络">
        <path d="M2 14A12 12 0 0 1 14 3M5 14a9 9 0 0 1 9-8M8 14a6 6 0 0 1 6-5M11 14a3 3 0 0 1 3-2" stroke="#ddd" strokeWidth="1.200" />
      </Tray>
      <Tray label="音量">
        <path d="M.5 6h2.500l3.500-3v10L3 10H.5zM9 6c1 1 1 3 0 4M11 4c2.500 2 2.500 6 0 8M13 2c4 3 4 9 0 12" stroke="#eee" />
      </Tray>
      <button className="w-6 text-[13px] leading-4">中</button>
      <span className="w-[3px]" />
      <Tray label="搜狗输入法">
        <path d="M1 2l14-1-1 13L2 15z" fill="#e8502c" />
        <path d="M11.500 4.500C8 3 4.500 4 5 6s6 1.500 6 3.500-4 2.500-7 1" stroke="#fff" strokeWidth="2" />
      </Tray>
    </div>
    <span className="ml-2.5 w-[11px] overflow-hidden pt-5 leading-4">20</span>
  </div>
);

/* ---------- dialog ---------- */

const DropArrow = () => (
  <span className="pointer-events-none flex h-[21px] w-[17px] shrink-0 items-center justify-center border border-[#adadad] bg-[#e1e1e1]">
    <Svg w={9} h={5}>
      <path d="M.5 .5l4 4 4-4" stroke="#555" />
    </Svg>
  </span>
);

const DuplicateDialog = ({ onClose }: { onClose: () => void }) => (
  <div
    role="dialog"
    aria-label="重复值"
    className="absolute top-[281px] left-[621px] w-[316px] border border-[#707070] bg-[#eeeeee] pb-[10px] text-black shadow-[0_4px_14px_rgba(0,0,0,0.4)]"
  >
    <div className="flex h-[30px] items-center bg-white pl-2">
      <span>重复值</span>
      <button aria-label="帮助" className="ml-auto w-6 text-sm">
        ?
      </button>
      <button aria-label="关闭" onClick={onClose} className="mr-[18px] ml-[27px]">
        <Svg w={11} h={11}>
          <path d="M.5 .5l10 10M10.500 .5l-10 10" stroke="#222" strokeWidth="1.200" />
        </Svg>
      </button>
    </div>
    <p className="pt-[10px] pl-[7px] leading-4 font-bold">为包含以下类型值的单元格设置格式:</p>
    <div className="mt-[15px] flex items-center pr-1.5 pl-1.5">
      <label className="flex h-[25px] w-[63px] items-center border border-[#a8a8a8] bg-white px-px">
        <select
          aria-label="值类型"
          className="h-[19px] w-[42px] appearance-none border border-dotted border-[#333] bg-[#99c9ef] outline-none"
        >
          <option>唯一</option>
          <option>重复</option>
        </select>
        <DropArrow />
      </label>
      <span className="mx-2.5 whitespace-nowrap">值，设置为</span>
      <label className="flex h-[25px] min-w-0 flex-1 items-center border border-[#a8a8a8] bg-white px-px">
        <select aria-label="设置为" className="min-w-0 flex-1 appearance-none pl-0.5 outline-none">
          <option>浅红填充色深红色文本</option>
        </select>
        <DropArrow />
      </label>
    </div>
    <div className="mt-4 flex justify-end gap-[11px] pr-[7px]">
      <button onClick={onClose} className="h-7 w-[73px] border-2 border-[#1a6fb8] bg-[#e1e1e1]">
        确定
      </button>
      <button onClick={onClose} className="h-7 w-[73px] border border-[#adadad] bg-[#e1e1e1]">
        取消
      </button>
    </div>
  </div>
);

const BusyPointer = () => (
  <Svg w={24} h={28} className="pointer-events-none absolute top-[430px] left-[294px]">
    <circle cx="14.500" cy="8.500" r="5.500" stroke="#2c8ce0" strokeWidth="4.500" />
    <path d="M8.500 6.500a6 6 0 0 1 4-4" stroke="#49b5f5" strokeWidth="3" />
    <path d="M.5 8.500v16l4-3.500 3 6 2.500-1-3-6h5z" fill="#fff" stroke="#222" />
  </Svg>
);

export default function App() {
  const [dialogOpen, setDialogOpen] = useState(true);

  return (
    <div className="relative flex h-screen flex-col overflow-hidden bg-[#217346] font-['Open_Sans','Noto_Sans_CJK_SC',sans-serif] text-xs">
      <TitleBar />
      <TabBar />
      <Ribbon />
      <FormulaBar />
      <Sheet />
      <SheetTabs />
      <StatusBar />
      <Taskbar />
      {dialogOpen && <DuplicateDialog onClose={() => setDialogOpen(false)} />}
      <BusyPointer />
    </div>
  );
}
